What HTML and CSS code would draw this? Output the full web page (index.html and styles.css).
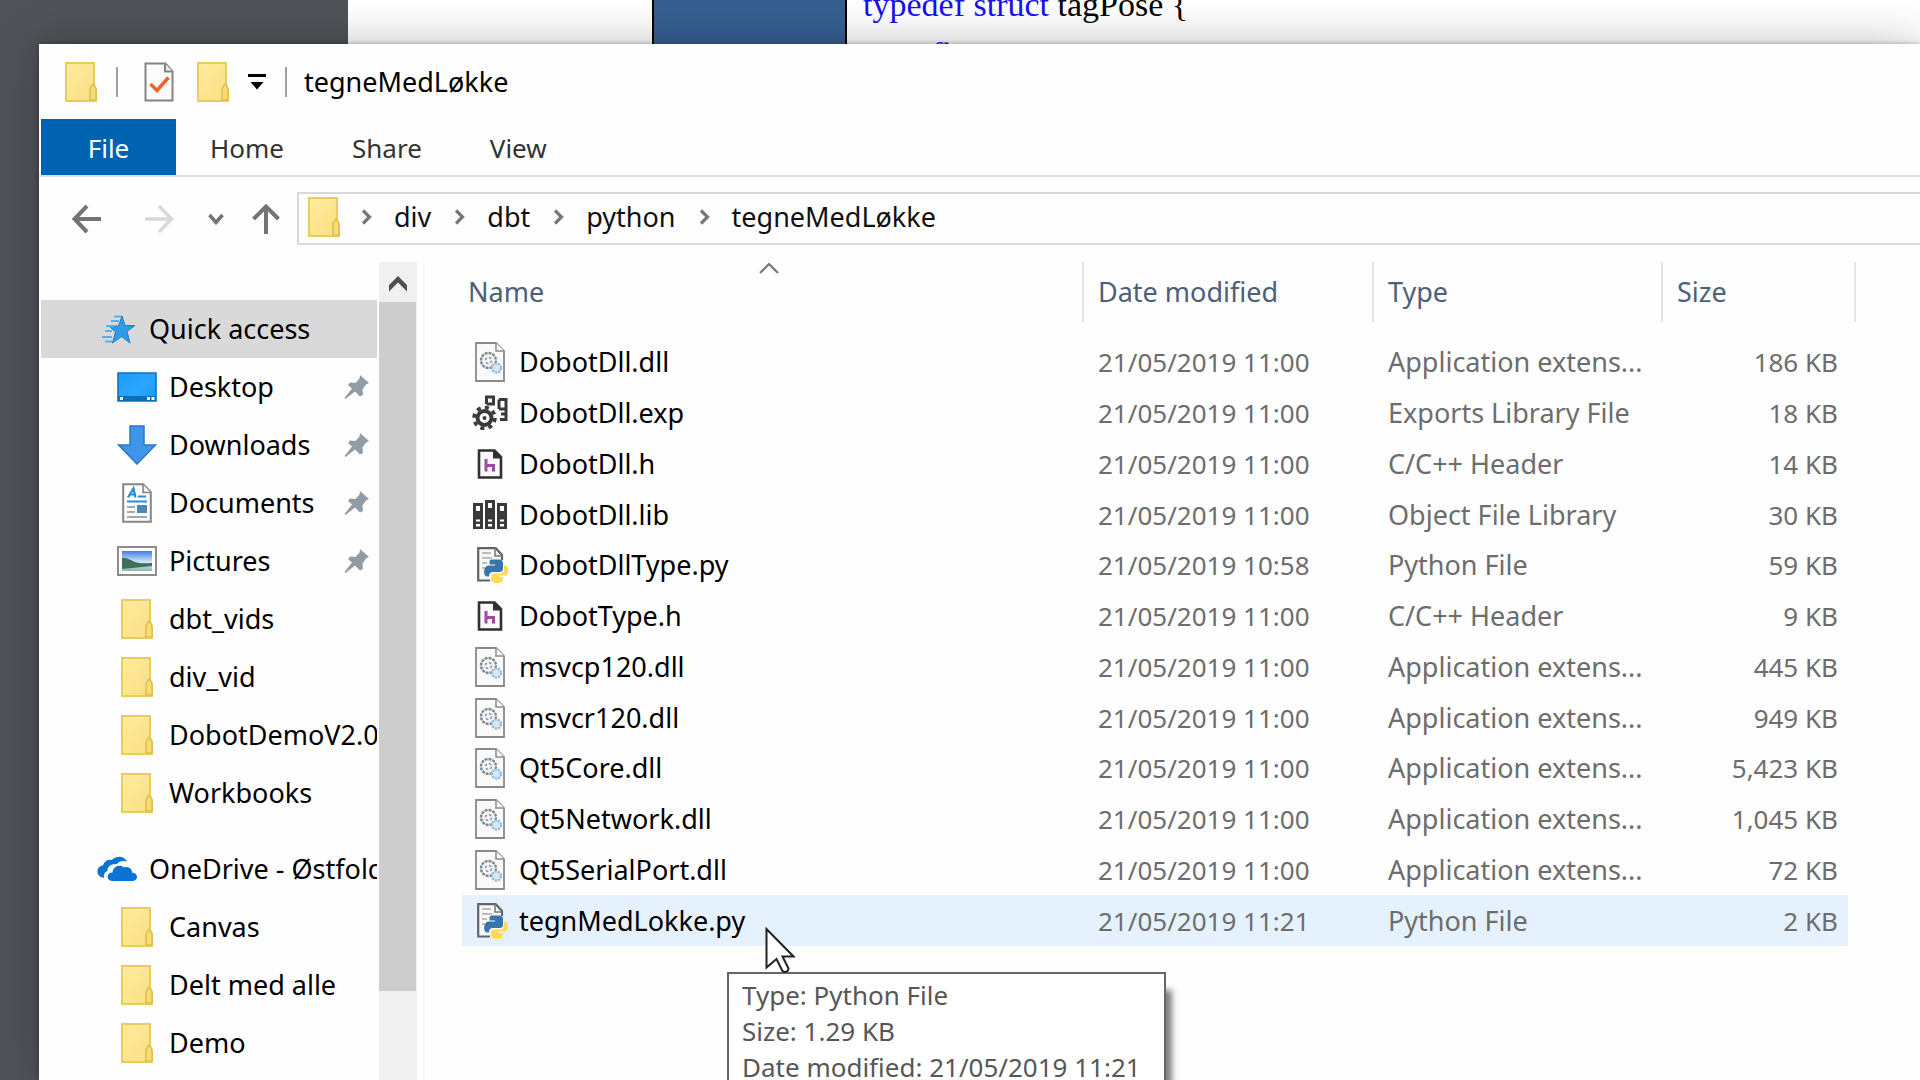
FILE: index.html
```html
<!DOCTYPE html>
<html lang="en">
<head>
<meta charset="utf-8">
<title>tegneMedLøkke</title>
<link rel="stylesheet" href="styles.css">
</head>
<body>
<svg class="sprite" aria-hidden="true">
  <defs>
    <linearGradient id="g-folder" x1="0" y1="0" x2="1" y2="1"><stop offset="0" stop-color="#ffeba0"/><stop offset="1" stop-color="#fbdf80"/></linearGradient>
    <linearGradient id="g-sky" x1="0" y1="0" x2="0" y2="1"><stop offset="0" stop-color="#3f7fe0"/><stop offset=".55" stop-color="#cfe8fb"/><stop offset="1" stop-color="#8fb8b0"/></linearGradient>
    <linearGradient id="g-desk" x1="0" y1="0" x2="1" y2="1"><stop offset="0" stop-color="#1b9dfb"/><stop offset=".6" stop-color="#2ba6fd"/><stop offset="1" stop-color="#1396f5"/></linearGradient>
  </defs>
  <symbol id="i-folder" viewBox="0 0 32 40">
    <path d="M1 1h28v23l2 4v11H1z" fill="url(#g-folder)" stroke="#e8cc60" stroke-width="2"/>
    <path d="M25 38V27l2.500-4.500h1.500l2 4V38z" fill="#f7dc78" stroke="#dfbd4c" stroke-width="1.500"/>
  </symbol>
  <symbol id="i-check" viewBox="0 0 30 40">
    <path d="M1.500 1.500h20l7 8v29h-27z" fill="#fbfbfd" stroke="#848484" stroke-width="2"/>
    <path d="M21 1.500v8h7.500" fill="#eee" stroke="#848484" stroke-width="2"/>
    <path d="M6.500 22l6.500 6.500 11.500-13" fill="none" stroke="#f0622a" stroke-width="3.500"/>
  </symbol>
  <symbol id="i-more" viewBox="0 0 18 16"><path d="M0 0h18v3H0zM2.500 8h13L9 15.500z" fill="#000"/></symbol>
  <symbol id="i-back" viewBox="0 0 30 30"><path d="M29 15H3M15 2L2.500 15 15 28" fill="none" stroke="currentColor" stroke-width="4"/></symbol>
  <symbol id="i-fwd" viewBox="0 0 30 30"><path d="M1 15h26M15 2l12.500 13L15 28" fill="none" stroke="currentColor" stroke-width="3.500"/></symbol>
  <symbol id="i-up" viewBox="0 0 28 30"><path d="M14 30V3M1.500 15L14 2.500 26.500 15" fill="none" stroke="currentColor" stroke-width="4"/></symbol>
  <symbol id="i-down" viewBox="0 0 16 12"><path d="M1.500 2L8 9.500 14.500 2" fill="none" stroke="currentColor" stroke-width="3.500"/></symbol>
  <symbol id="i-right" viewBox="0 0 12 18"><path d="M3 2.500L9.500 9 3 15.500" fill="none" stroke="currentColor" stroke-width="3.200"/></symbol>
  <symbol id="i-sort" viewBox="0 0 20 12"><path d="M1 11L10 2l9 9" fill="none" stroke="currentColor" stroke-width="2.200"/></symbol>
  <symbol id="i-scroll" viewBox="0 0 20 16"><path d="M1 9l9-9 9 9v6.500l-9-9-9 9z" fill="currentColor"/></symbol>
  <symbol id="i-star" viewBox="-4 -4 40 40">
    <path d="M21 3l3 9.500h10l-8 6 3 11.500-8.500-6.500-9 6.500 3-11-6.500-6h9.500z" fill="#2b9bea" stroke="#1c7fc4" stroke-width="1"/>
    <path d="M13 3.500h7M10 8h8M5 13h8M4 18h7M1 24h10M4 28.500h7" stroke="#52b1ef" stroke-width="1.800"/>
  </symbol>
  <symbol id="i-desktop" viewBox="0 0 40 30">
    <path d="M1 1h38v28H1z" fill="url(#g-desk)" stroke="#0f72c0" stroke-width="1.600"/>
    <path d="M1 24h38v5H1z" fill="#0c6db8"/><path d="M3 25h3v3H3zM30 25h3v3h-3zM34.500 25h3v3h-3z" fill="#fff"/>
  </symbol>
  <symbol id="i-download" viewBox="0 0 40 40"><path d="M13 1h14v19h11.500L20 39 1.500 20H13z" fill="#3f95e8" stroke="#2a78c8" stroke-width="1.500"/></symbol>
  <symbol id="i-doc" viewBox="0 0 30 40">
    <path d="M1.200 1.200h20l7.600 8v29.600H1.200z" fill="#fff" stroke="#858585" stroke-width="2"/>
    <path d="M21 1.500v8h7.500" fill="#f4f4f4" stroke="#858585" stroke-width="1.600"/>
    <path d="M6 14.500l5.500-9 2 9M8 11.500h6M16 13.500h8M5 18.500h20" stroke="#2a8bd6" stroke-width="2.200" fill="none"/>
    <path d="M5 24h8M5 29h8M5 34h20" stroke="#8a8a8a" stroke-width="1.500"/><path d="M15 22h10v8H15z" fill="#4f86b8"/>
  </symbol>
  <symbol id="i-picture" viewBox="0 0 40 30">
    <path d="M1 1h38v28H1z" fill="#fff" stroke="#8c8c8c" stroke-width="2"/><path d="M5 5h30v20H5z" fill="url(#g-sky)"/>
    <path d="M5 12c4-1 8 2 13 4 6 2 12 1 17 1v3l-30 3z" fill="#3f6f57"/>
  </symbol>
  <symbol id="i-pin" viewBox="0 0 26 26"><path d="M16 1l9 8-3 1.500-3.500 5 .5 5.500-3 1.500-5-5L1.500 25 .5 24 8 14.500 4 11l2-2.500 5.500.5 4-4.500z" fill="#929ca6"/></symbol>
  <symbol id="i-cloud" viewBox="0 0 40 26">
    <path d="M7 22C2 21 0 18 .5 14.500 1 11 4 9.500 6 9.500 8 4 12 3 15 4c3-4 12-5.500 15 1.500-5-1.500-8 0-10 2.500-6-.5-10 3-9.500 7C7.500 16 6.500 19 7 22z" fill="#0b73d4"/>
    <path d="M15 25c-6-.5-6-8.500.500-8.500C16 10 23 8 27 11.500c4-1.500 8 1 8 5 6.500.500 6.500 8 1 8.500z" fill="#0b73d4"/>
  </symbol>
  <symbol id="i-dll" viewBox="0 0 36 40">
    <path d="M4 1h20l8 8v30H4z" fill="#fafafa" stroke="#8a8a8a" stroke-width="1.800"/>
    <path d="M24 1v8h8" fill="#fff" stroke="#8a8a8a" stroke-width="1.500"/>
    <circle cx="16.500" cy="18.500" r="7.500" fill="#f4f6f8" stroke="#7e868e" stroke-width="2.400" stroke-dasharray="2.900 1"/>
    <circle cx="16.500" cy="18.500" r="3" fill="none" stroke="#8e969e" stroke-width="1.600" stroke-dasharray="2.700 2"/>
    <circle cx="24.500" cy="26" r="4.600" fill="#d6e8f6" stroke="#9cbcd4" stroke-width="2.200" stroke-dasharray="2.400 .8"/>
  </symbol>
  <symbol id="i-exp" viewBox="0 0 36 36">
    <g fill="none" stroke="#3a3a3a"><path d="M14.500 9V2h7v7h-7" stroke-width="3"/><path d="M27 4.500h7v20h-6M27 14V4.500M27 14h7M29 19h5" stroke-width="3"/>
    <circle cx="12.500" cy="23" r="7" stroke-width="4"/><circle cx="12.500" cy="23" r="10.500" stroke-width="3.500" stroke-dasharray="4.100 4.147"/></g>
    <circle cx="12.500" cy="23" r="2" fill="#3a3a3a"/>
  </symbol>
  <symbol id="i-h" viewBox="0 0 36 36">
    <path d="M7 4.500h15.500L29 11v20.500H7z" fill="#fbf7fb" stroke="#303030" stroke-width="2.600"/><path d="M21 4h2l7 7v1.500h-9z" fill="#303030"/>
    <path d="M14 13v12.500M14 19.500h7.500v6" fill="none" stroke="#a04aa6" stroke-width="3"/>
  </symbol>
  <symbol id="i-lib" viewBox="0 0 36 36">
    <path d="M1 6h10v26H1zM13 3h10v29H13zM25 6h10v26H25z" fill="#3a3a3a"/>
    <path d="M4 9h4v5H4zM16 6h4v5h-4zM28 9h4v5h-4zM4 22.500h4v2H4zM16 22.500h4v2h-4zM28 22.500h4v2h-4zM4 27h4v2.500H4zM16 27h4v2.500h-4zM28 27h4v2.500h-4z" fill="#fff"/>
  </symbol>
  <symbol id="i-py" viewBox="0 0 36 38">
    <path d="M6 2h18l6 7v26H6z" fill="#fafafa"/><path d="M18 34.500H6.200V2.200h17.500L30 9v5" fill="none" stroke="#5f6468" stroke-width="2.200"/>
    <path d="M23 2v8h7" fill="none" stroke="#7a7a7a" stroke-width="1.600"/><path d="M10 7h9M10 12h10M10 17h5M10 22h3" stroke="#a9a9a9" stroke-width="1.600"/>
    <path d="M20 13.500h7c3 0 4 1.500 4 4V22c0 3-1 4-4 4h-6c-3 0-4 1.500-4 4.500h-2c-4 0-4-10 1-11h7v-1h-5.500v-3c0-1 .5-2 2.500-2z" fill="#3776ab"/>
    <path d="M32 19.500h2c3 1 3 9 0 10h-7v1.500h4v3c0 4-12 4-12 0v-3c0-2.500 1-3.500 4-3.500h5c3 0 4-1.500 4-4.500z" fill="#ffdb4d"/>
  </symbol>
</svg>

<main class="desktop">
  <div class="viewer">
    <div class="paper">
      <div class="swatch"></div>
      <pre class="code"><span class="kw">typedef struct</span> tagPose {
        <span class="kw">float</span> x;</pre>
    </div>
  </div>

  <section class="window">
    <header class="titlebar">
      <svg class="ic-folder"><use href="#i-folder"/></svg>
      <span class="sep"></span>
      <button class="qat check" aria-label="Properties"><svg class="ic-page"><use href="#i-check"/></svg></button>
      <button class="qat new" aria-label="New folder"><svg class="ic-folder"><use href="#i-folder"/></svg></button>
      <button class="qat more" aria-label="Customize"><svg class="ic-more"><use href="#i-more"/></svg></button>
      <span class="sep"></span>
      <h1 class="title">tegneMedLøkke</h1>
    </header>

    <nav class="tabs">
      <button class="tab file">File</button>
      <button class="tab">Home</button>
      <button class="tab">Share</button>
      <button class="tab">View</button>
    </nav>

    <div class="navbar">
      <div class="history">
        <button aria-label="Back"><svg class="ic-arrow"><use href="#i-back"/></svg></button>
        <button class="off" aria-label="Forward"><svg class="ic-arrow"><use href="#i-fwd"/></svg></button>
        <button aria-label="Recent locations"><svg class="ic-down"><use href="#i-down"/></svg></button>
        <button aria-label="Up"><svg class="ic-up"><use href="#i-up"/></svg></button>
      </div>
      <div class="address">
        <svg class="ic-folder"><use href="#i-folder"/></svg>
        <svg class="ic-right"><use href="#i-right"/></svg>
        <a href="#">div</a>
        <svg class="ic-right"><use href="#i-right"/></svg>
        <a href="#">dbt</a>
        <svg class="ic-right"><use href="#i-right"/></svg>
        <a href="#">python</a>
        <svg class="ic-right"><use href="#i-right"/></svg>
        <a href="#">tegneMedLøkke</a>
      </div>
    </div>

    <div class="content">
      <nav class="tree">
        <a class="root active" href="#"><svg><use href="#i-star"/></svg><span>Quick access</span></a>
        <a href="#"><svg><use href="#i-desktop"/></svg><span>Desktop</span><svg class="pin"><use href="#i-pin"/></svg></a>
        <a href="#"><svg><use href="#i-download"/></svg><span>Downloads</span><svg class="pin"><use href="#i-pin"/></svg></a>
        <a href="#"><svg><use href="#i-doc"/></svg><span>Documents</span><svg class="pin"><use href="#i-pin"/></svg></a>
        <a href="#"><svg><use href="#i-picture"/></svg><span>Pictures</span><svg class="pin"><use href="#i-pin"/></svg></a>
        <a href="#"><svg><use href="#i-folder"/></svg><span>dbt_vids</span></a>
        <a href="#"><svg><use href="#i-folder"/></svg><span>div_vid</span></a>
        <a href="#"><svg><use href="#i-folder"/></svg><span>DobotDemoV2.0</span></a>
        <a href="#"><svg><use href="#i-folder"/></svg><span>Workbooks</span></a>
        <a class="root cloud" href="#"><svg><use href="#i-cloud"/></svg><span>OneDrive - Østfold</span></a>
        <a href="#"><svg><use href="#i-folder"/></svg><span>Canvas</span></a>
        <a href="#"><svg><use href="#i-folder"/></svg><span>Delt med alle</span></a>
        <a href="#"><svg><use href="#i-folder"/></svg><span>Demo</span></a>
      </nav>
      <div class="scroll">
        <button class="scroll-up" aria-label="Scroll up"><svg class="ic-scroll"><use href="#i-scroll"/></svg></button>
        <div class="thumb"></div>
      </div>

      <div class="list">
        <table class="files">
          <colgroup><col class="c-name"><col class="c-date"><col class="c-type"><col class="c-size"></colgroup>
          <thead>
            <tr>
              <th><div class="head">Name<svg class="ic-sort"><use href="#i-sort"/></svg></div></th>
              <th><div class="head">Date modified</div></th>
              <th><div class="head">Type</div></th>
              <th><div class="head">Size</div></th>
            </tr>
          </thead>
          <tbody>
            <tr><td><div class="name"><svg><use href="#i-dll"/></svg>DobotDll.dll</div></td><td class="num">21/05/2019 11:00</td><td>Application extens...</td><td class="num">186 KB</td></tr>
            <tr><td><div class="name"><svg><use href="#i-exp"/></svg>DobotDll.exp</div></td><td class="num">21/05/2019 11:00</td><td>Exports Library File</td><td class="num">18 KB</td></tr>
            <tr><td><div class="name"><svg><use href="#i-h"/></svg>DobotDll.h</div></td><td class="num">21/05/2019 11:00</td><td>C/C++ Header</td><td class="num">14 KB</td></tr>
            <tr><td><div class="name"><svg><use href="#i-lib"/></svg>DobotDll.lib</div></td><td class="num">21/05/2019 11:00</td><td>Object File Library</td><td class="num">30 KB</td></tr>
            <tr><td><div class="name"><svg><use href="#i-py"/></svg>DobotDllType.py</div></td><td class="num">21/05/2019 10:58</td><td>Python File</td><td class="num">59 KB</td></tr>
            <tr><td><div class="name"><svg><use href="#i-h"/></svg>DobotType.h</div></td><td class="num">21/05/2019 11:00</td><td>C/C++ Header</td><td class="num">9 KB</td></tr>
            <tr><td><div class="name"><svg><use href="#i-dll"/></svg>msvcp120.dll</div></td><td class="num">21/05/2019 11:00</td><td>Application extens...</td><td class="num">445 KB</td></tr>
            <tr><td><div class="name"><svg><use href="#i-dll"/></svg>msvcr120.dll</div></td><td class="num">21/05/2019 11:00</td><td>Application extens...</td><td class="num">949 KB</td></tr>
            <tr><td><div class="name"><svg><use href="#i-dll"/></svg>Qt5Core.dll</div></td><td class="num">21/05/2019 11:00</td><td>Application extens...</td><td class="num">5,423 KB</td></tr>
            <tr><td><div class="name"><svg><use href="#i-dll"/></svg>Qt5Network.dll</div></td><td class="num">21/05/2019 11:00</td><td>Application extens...</td><td class="num">1,045 KB</td></tr>
            <tr><td><div class="name"><svg><use href="#i-dll"/></svg>Qt5SerialPort.dll</div></td><td class="num">21/05/2019 11:00</td><td>Application extens...</td><td class="num">72 KB</td></tr>
            <tr class="hover"><td><div class="name"><svg><use href="#i-py"/></svg>tegnMedLokke.py</div></td><td class="num">21/05/2019 11:21</td><td>Python File</td><td class="num">2 KB</td></tr>
          </tbody>
        </table>
      </div>
    </div>
  </section>

  <div class="tooltip" role="tooltip">
    <div>Type: Python File</div>
    <div>Size: 1.29 KB</div>
    <div>Date modified: 21/05/2019 11:21</div>
  </div>
  <svg class="cursor" viewBox="0 0 30 46"><path d="M1.500 2v38.500l10-8.500 6 12c2.500 2 6 .5 6-2.500l-6-12h11z" fill="#fff" stroke="#222" stroke-width="2"/></svg>
</main>
</body>
</html>
```
FILE: styles.css
```css
* { box-sizing: border-box; }

body {
  margin: 0;
  overflow: hidden;
  font-family: "Noto Sans", "Open Sans", sans-serif;
  font-size: 27px;
  line-height: 36px;
  color: #000;
}

button {
  margin: 0;
  padding: 0;
  border: 0;
  background: none;
  font: inherit;
  color: inherit;
}

a { color: inherit; text-decoration: none; }
svg { display: block; flex: none; }
.sprite { position: absolute; width: 0; height: 0; }

.desktop {
  position: relative;
  height: 100vh;
  overflow: hidden;
  background: #505358;
}

/* document viewer behind the window */
.viewer { display: flex; padding-left: 348px; }

.paper {
  flex: 1;
  display: flex;
  gap: 16px;
  height: 300px;
  padding-left: 304px;
  background: #fff;
}

.swatch {
  width: 195px;
  background: #365f91;
  border: solid #000;
  border-width: 0 2px;
}

.code {
  margin: -20px 0 0;
  font-family: "Liberation Serif", serif;
  font-size: 34px;
  line-height: 50px;
}

.kw { color: #1a10f0; }

/* explorer window */
.window {
  position: absolute;
  inset: 44px 0 0 39px;
  display: flex;
  flex-direction: column;
  background: #fefefe;
  box-shadow: 0 0 5px rgba(0, 0, 0, .3), 0 0 44px rgba(0, 0, 0, .25);
}

.titlebar {
  display: flex;
  align-items: center;
  height: 75px;
  padding-left: 26px;
}

.ic-folder { width: 32px; height: 40px; }
.ic-page { width: 30px; height: 40px; }
.ic-more { width: 18px; height: 16px; }
.sep { width: 2px; height: 30px; margin: 0 0 0 19px; background: #a0a0a0; }
.qat.check { margin-left: 26px; }
.qat.new { margin-left: 23px; }
.qat.more { margin-left: 19px; }
.title { margin: 0 0 0 17px; font-size: 27px; font-weight: 400; }

.tabs {
  display: flex;
  padding-left: 2px;
  border-bottom: 2px solid #dcdcdc;
  font-size: 26px;
}

.tab { height: 56px; padding: 2px 34px 0; color: #333; }
.tab.file { width: 135px; margin: 0 0 -1px; padding: 2px 0 0; background: #0063b1; color: #fff; }

.navbar { display: flex; padding: 15px 0 0 33px; }

.history {
  display: flex;
  align-items: center;
  width: 225px;
  color: #747474;
}

.history button + button { margin-left: 42px; }
.history button:nth-child(3) { margin-left: 34px; }
.history button:nth-child(4) { margin-left: 28px; }
.history .off { color: #d9d9d9; }
.ic-arrow { width: 30px; height: 30px; }
.ic-down { width: 16px; height: 12px; }
.ic-up { width: 28px; height: 30px; }

.address {
  flex: 1;
  display: flex;
  align-items: center;
  height: 53px;
  padding: 0 0 3px 9px;
  border: 2px solid #d9d9d9;
  border-right: 0;
  color: #111;
}

.ic-right { width: 12px; height: 18px; margin: 0 22px; color: #777; }
.address .ic-folder + .ic-right { margin-left: 20px; }

.content { flex: 1; display: flex; min-height: 0; padding-top: 17px; }

/* folder tree */
.tree {
  display: flex;
  flex-direction: column;
  width: 338px;
  padding: 38px 0 0 2px;
  overflow: hidden;
  white-space: nowrap;
}

.tree a {
  flex: none;
  display: flex;
  align-items: center;
  gap: 12px;
  height: 58px;
  padding-left: 76px;
  overflow: hidden;
}

.tree a > svg:first-child { width: 40px; height: 40px; }
.tree a.root { padding-left: 56px; }
.tree a.active { background: #d9d9d9; }
.tree a.cloud { margin-top: 18px; }
.tree .pin { width: 26px; height: 26px; margin: 0 7px 0 auto; }

.scroll {
  width: 38px;
  margin-left: 2px;
  background: #f0f0f0;
}

.scroll-up { display: flex; align-items: center; justify-content: center; width: 100%; height: 40px; padding-top: 4px; color: #505050; }
.ic-scroll { width: 20px; height: 16px; }
.thumb { width: 37px; height: 689px; background: #cdcdcd; }

/* file list */
.list { flex: 1; margin-left: 6px; padding-left: 37px; border-left: 2px solid #f8f8f8; }

.files {
  width: 1394px;
  height: 684px;
  table-layout: fixed;
  border-collapse: collapse;
  color: #6d6d6d;
}

.c-name { width: 622px; }
.c-date { width: 290px; }
.c-type { width: 289px; }
.c-size { width: 193px; }

th { height: 75px; padding: 0; vertical-align: top; font-weight: 400; text-align: left; }

.head {
  position: relative;
  height: 60px;
  padding: 12px 0 0 14px;
  border-right: 2px solid #e5e5e5;
  color: #4c607a;
}

th:first-child .head { padding-left: 6px; }
.ic-sort { position: absolute; top: 0; left: 297px; width: 20px; height: 12px; color: #777; }

td { padding: 0 0 0 14px; white-space: nowrap; }
td:first-child { padding-left: 10px; }
td:last-child { padding: 0 18px 0 0; text-align: right; }
.num { font-size: 26px; }

.name { display: flex; align-items: center; gap: 11px; color: #000; }
.name svg { width: 36px; height: 40px; }

.hover td { background: #e5f2fd; }
.hover td:last-child { background: linear-gradient(#e5f2fd, #e5f2fd) 0 0 / calc(100% - 8px) 100% no-repeat; }

.tooltip {
  position: absolute;
  top: 972px;
  left: 727px;
  width: 439px;
  height: 134px;
  padding: 3px 13px;
  border: 2px solid #666;
  background: #fff;
  box-shadow: 8px 16px 6px -2px rgba(0, 0, 0, .5);
  font-size: 26px;
  color: #575757;
  white-space: nowrap;
}

.cursor { position: absolute; top: 927px; left: 765px; width: 30px; height: 46px; }
```
